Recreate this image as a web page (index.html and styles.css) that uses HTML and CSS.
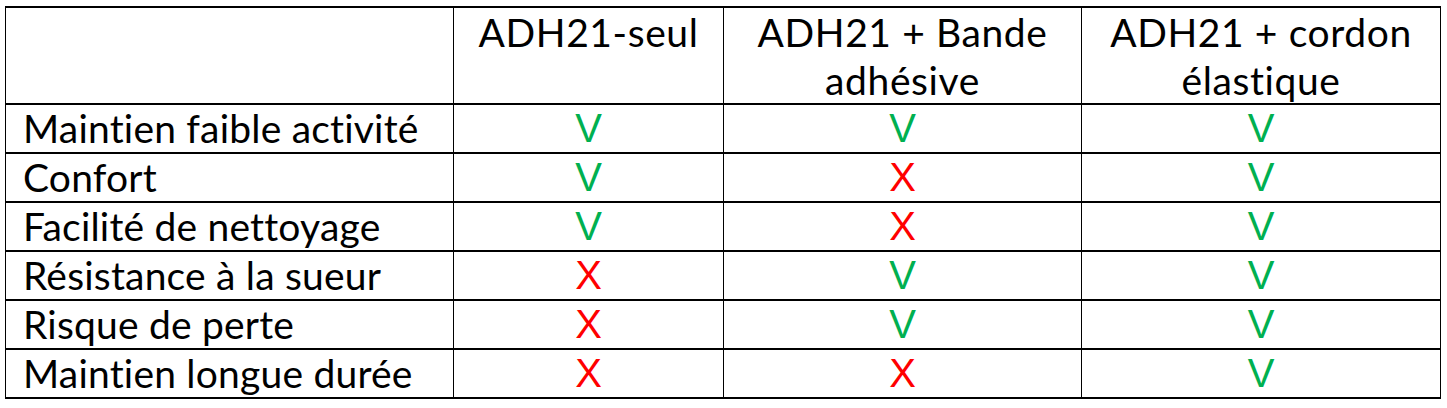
FILE: index.html
```html
<!DOCTYPE html>
<html lang="fr">
<head>
<meta charset="utf-8">
<title>Comparatif ADH21</title>
<link rel="stylesheet" href="styles.css">
</head>
<body>
<div class="grid">
  <div class="cell head"></div>
  <div class="cell head">ADH21-seul</div>
  <div class="cell head">ADH21 + Bande<br>adhésive</div>
  <div class="cell head">ADH21 + cordon<br>élastique</div>

  <div class="cell label">Maintien faible activité</div>
  <div class="cell mark yes">V</div>
  <div class="cell mark yes">V</div>
  <div class="cell mark yes">V</div>

  <div class="cell label">Confort</div>
  <div class="cell mark yes">V</div>
  <div class="cell mark no">X</div>
  <div class="cell mark yes">V</div>

  <div class="cell label">Facilité de nettoyage</div>
  <div class="cell mark yes">V</div>
  <div class="cell mark no">X</div>
  <div class="cell mark yes">V</div>

  <div class="cell label">Résistance à la sueur</div>
  <div class="cell mark no">X</div>
  <div class="cell mark yes">V</div>
  <div class="cell mark yes">V</div>

  <div class="cell label">Risque de perte</div>
  <div class="cell mark no">X</div>
  <div class="cell mark yes">V</div>
  <div class="cell mark yes">V</div>

  <div class="cell label">Maintien longue durée</div>
  <div class="cell mark no">X</div>
  <div class="cell mark no">X</div>
  <div class="cell mark yes">V</div>
</div>
</body>
</html>
```
FILE: styles.css
```css
html, body {
  margin: 0;
  padding: 0;
  background: #ffffff;
}
body {
  padding: 6px 0 0 5px;
}
.grid {
  display: grid;
  width: 1436px;
  box-sizing: border-box;
  grid-template-columns: 447px 269px 357px 1fr;
  grid-template-rows: 95px repeat(6, 47px);
  column-gap: 1px;
  row-gap: 2px;
  padding: 2px 1px;
  background: #000000;
  font-family: Lato, "Open Sans", sans-serif;
  font-variant-ligatures: none;
  font-feature-settings: "liga" 0;
  color: #000000;
}
.cell {
  background: #ffffff;
  overflow: hidden;
}
.head {
  font-size: 39px;
  line-height: 48px;
  letter-spacing: 0.6px;
  text-align: center;
}
.label {
  font-size: 39px;
  line-height: 46px;
  letter-spacing: 0.2px;
  padding-left: 17px;
}
.mark {
  font-family: "Liberation Sans", Arial, sans-serif;
  font-size: 40px;
  line-height: 46px;
  text-align: center;
}
.yes { color: #00b050; }
.no { color: #ff0000; }
```
